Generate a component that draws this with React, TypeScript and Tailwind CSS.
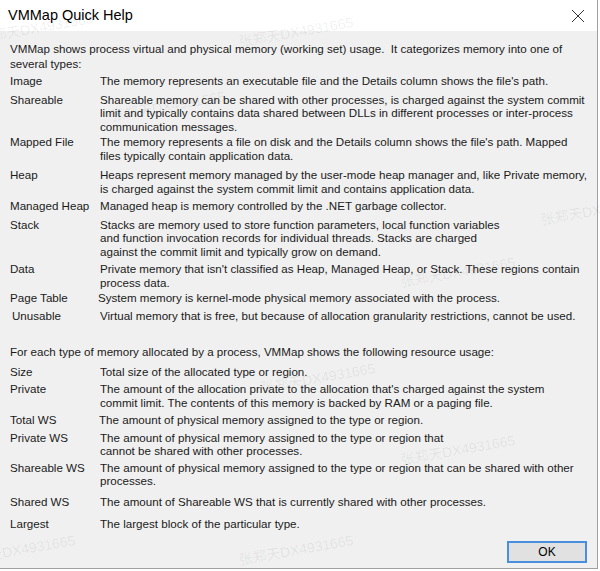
import React from "react";

type Row = { label: string; lines: string[]; mt: string; shift?: string; labelShift?: string };

const types: Row[] = [
  { label: "Image", mt: "mt-[4px]", lines: ["The memory represents an executable file and the Details column shows the file's path."] },
  {
    label: "Shareable",
    mt: "mt-[5px]",
    lines: [
      "Shareable memory can be shared with other processes, is charged against the system commit",
      "limit and typically contains data shared between DLLs in different processes or inter-process",
      "communication messages.",
    ],
  },
  {
    label: "Mapped File",
    mt: "mt-[2px]",
    lines: [
      "The memory represents a file on disk and the Details column shows the file's path. Mapped",
      "files typically contain application data.",
    ],
  },
  {
    label: "Heap",
    mt: "mt-[6px]",
    lines: [
      "Heaps represent memory managed by the user-mode heap manager and, like Private memory,",
      "is charged against the system commit limit and contains application data.",
    ],
  },
  { label: "Managed Heap", mt: "mt-[4px]", lines: ["Managed heap is memory controlled by the .NET garbage collector."] },
  {
    label: "Stack",
    mt: "mt-[5px]",
    lines: [
      "Stacks are memory used to store function parameters, local function variables",
      "and function invocation records for individual threads. Stacks are charged",
      "against the commit limit and typically grow on demand.",
    ],
  },
  {
    label: "Data",
    mt: "mt-[4px]",
    lines: [
      "Private memory that isn't classified as Heap, Managed Heap, or Stack. These regions contain",
      "process data.",
    ],
  },
  { label: "Page Table", mt: "mt-[2px]", shift: "-ml-[2px]", lines: ["System memory is kernel-mode physical memory associated with the process."] },
  { label: "Unusable", mt: "mt-[4px]", labelShift: "ml-[2px] -mr-[2px]", lines: ["Virtual memory that is free, but because of allocation granularity restrictions, cannot be used."] },
];

const usage: Row[] = [
  { label: "Size", mt: "mt-[6px]", lines: ["Total size of the allocated type or region."] },
  {
    label: "Private",
    mt: "mt-[4px]",
    lines: [
      "The amount of the allocation private to the allocation that's charged against the system",
      "commit limit. The contents of this memory is backed by RAM or a paging file.",
    ],
  },
  { label: "Total WS", mt: "mt-[4px]", shift: "-ml-[1px]", lines: ["The amount of physical memory assigned to the type or region."] },
  {
    label: "Private WS",
    mt: "mt-[4px]",
    lines: ["The amount of physical memory assigned to the type or region that", "cannot be shared with other processes."],
  },
  {
    label: "Shareable WS",
    mt: "mt-[3px]",
    lines: ["The amount of physical memory assigned to the type or region that can be shared with other", "processes."],
  },
  { label: "Shared WS", mt: "mt-[7px]", lines: ["The amount of Shareable WS that is currently shared with other processes."] },
  { label: "Largest", mt: "mt-[9px]", lines: ["The largest block of the particular type."] },
];

const marks = [
  { cls: "left-[-22px] top-[18px]", text: "张郑天DX4931665" },
  { cls: "left-[238px] top-[22px]", text: "张郑天DX4931665" },
  { cls: "left-[110px] top-[96px]", text: "张郑天DX4931665" },
  { cls: "left-[540px] top-[200px]", text: "张郑天DX4931665" },
  { cls: "left-[400px] top-[262px]", text: "张郑天DX4931665" },
  { cls: "left-[260px] top-[368px]", text: "张郑天DX4931665" },
  { cls: "left-[400px] top-[440px]", text: "张郑天DX4931665" },
  { cls: "left-[-40px] top-[540px]", text: "张郑天DX4931665" },
  { cls: "left-[238px] top-[540px]", text: "张郑天DX4931665" },
];

function Entry({ row }: { row: Row }) {
  return (
    <div className={`flex ${row.mt}`}>
      <div className={`w-[90px] shrink-0 ${row.labelShift ?? ""}`}>{row.label}</div>
      <div className={`flex flex-col ${row.shift ?? ""}`}>
        {row.lines.map((l) => (
          <div key={l} className="whitespace-nowrap">
            {l}
          </div>
        ))}
      </div>
    </div>
  );
}

export default function App() {
  return (
    <div className="relative w-[600px] h-[571px] overflow-hidden bg-white font-['Liberation_Sans','Noto_Sans_CJK_SC',sans-serif] text-[#1a1a1a]">
      <div className="w-[598px] h-[569px] flex flex-col border-r border-b border-[#a0a0a0]">
        {/* Title bar */}
        <div className="h-[31px] shrink-0 bg-white flex items-center justify-between pl-[8px] pr-[12px]">
          <span className="text-[14.5px] text-black">VMMap Quick Help</span>
          <svg width="14" height="14" viewBox="0 0 14 14" className="text-[#333]">
            <path d="M1 1 L13 13 M13 1 L1 13" stroke="currentColor" strokeWidth="1" fill="none" />
          </svg>
        </div>

        {/* Body */}
        <div className="flex-1 bg-[#f0f0f0] pl-[10px] pt-[11px] text-[11.6px] leading-[13.5px] flex flex-col">
          <div className="whitespace-nowrap">
            VMMap shows process virtual and physical memory (working set) usage.&nbsp; It categorizes memory into one of
          </div>
          <div className="mt-[1px]">several types:</div>
          {types.map((r) => (
            <Entry key={r.label} row={r} />
          ))}

          <div className="mt-[23px] whitespace-nowrap">
            For each type of memory allocated by a process, VMMap shows the following resource usage:
          </div>
          {usage.map((r) => (
            <Entry key={r.label} row={r} />
          ))}

          <div className="flex justify-end pr-[10px] mt-auto pb-[5px]">
            <button className="w-[80px] h-[22px] bg-[#e1e1e1] border-2 border-[#4a8ee0] text-[12px] text-black leading-none">
              OK
            </button>
          </div>
        </div>
      </div>

      {marks.map((m, i) => (
        <span
          key={i}
          className={`absolute ${m.cls} -rotate-[10deg] text-[14px] text-black/[0.07] whitespace-nowrap pointer-events-none`}
        >
          {m.text}
        </span>
      ))}
    </div>
  );
}
